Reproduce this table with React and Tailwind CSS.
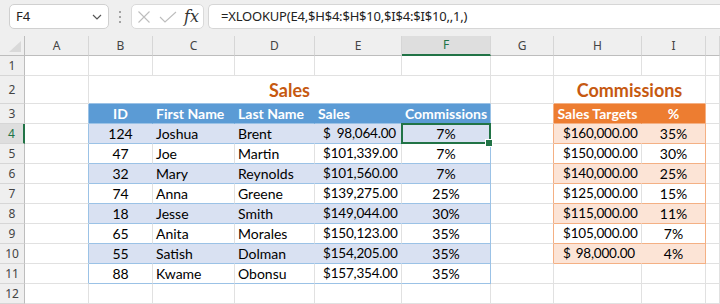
import React from "react";

const GRID = "grid grid-cols-[25px_64px_64px_82px_80px_87px_89px_63px_88px_64px_1fr]";

const sales = [
  [124, "Joshua", "Brent", "98,064.00", "7%"],
  [47, "Joe", "Martin", "101,339.00", "7%"],
  [32, "Mary", "Reynolds", "101,560.00", "7%"],
  [74, "Anna", "Greene", "139,275.00", "25%"],
  [18, "Jesse", "Smith", "149,044.00", "30%"],
  [65, "Anita", "Morales", "150,123.00", "35%"],
  [55, "Satish", "Dolman", "154,205.00", "35%"],
  [88, "Kwame", "Obonsu", "157,354.00", "35%"],
];

const comm = [
  ["160,000.00", "35%"],
  ["150,000.00", "30%"],
  ["140,000.00", "25%"],
  ["125,000.00", "15%"],
  ["115,000.00", "11%"],
  ["105,000.00", "7%"],
  ["98,000.00", "4%"],
];

const GRAY_R = "border-r-[#e1e1e1]";
const GRAY_B = "border-b-[#e1e1e1]";

function C({ r = GRAY_R, b = GRAY_B, bg = "", cls = "", children }) {
  return (
    <div className={`border-r border-b ${r} ${b} ${bg} ${cls} min-w-0 whitespace-nowrap`}>
      {children}
    </div>
  );
}

function RowHead({ n, sel }) {
  return sel ? (
    <div className="border-r-2 border-b border-r-[#217346] border-b-[#d6d6d6] bg-[#dedede] flex items-center justify-center text-[12px] text-[#217346] font-['Noto_Sans',sans-serif]">
      {n}
    </div>
  ) : (
    <div className="border-r border-b border-r-[#bdbdbd] border-b-[#d6d6d6] bg-[#efefef] flex items-center justify-center text-[12px] text-[#444] font-['Noto_Sans',sans-serif]">
      {n}
    </div>
  );
}

function Money({ v, pl = "pl-[8px]", pr = "pr-[5px]" }) {
  return (
    <div className={`flex justify-between ${pl} ${pr} text-[13.5px] tracking-[-0.2px]`}>
      <span>$</span>
      <span>{v}</span>
    </div>
  );
}

function TopBar() {
  return (
    <div className="h-[36px] bg-[#efefef] flex items-start pt-[4px] font-['Noto_Sans',sans-serif]">
      <div className="ml-[9px] w-[100px] h-[25px] bg-white border border-[#d0d0d0] rounded-[5px] flex items-center justify-between pl-[6px] pr-[6px]">
        <span className="text-[13px] text-[#222]">F4</span>
        <svg width="10" height="6" viewBox="0 0 10 6" className="mt-[1px]">
          <polyline points="1,1 5,5 9,1" fill="none" stroke="#555" strokeWidth="1.2" />
        </svg>
      </div>
      <div className="w-[22px] h-[25px] flex flex-col items-center justify-center gap-[3px]">
        <div className="w-[2px] h-[2px] bg-[#8a8a8a] rounded-full"></div>
        <div className="w-[2px] h-[2px] bg-[#8a8a8a] rounded-full"></div>
        <div className="w-[2px] h-[2px] bg-[#8a8a8a] rounded-full"></div>
      </div>
      <div className="w-[73px] h-[25px] bg-white border border-[#dadada] rounded-[5px] flex items-center pl-[5px]">
        <svg width="14" height="14" viewBox="0 0 14 14">
          <path d="M1.5 1.5 L12.5 12.5 M12.5 1.5 L1.5 12.5" stroke="#bdbdbd" strokeWidth="1.1" fill="none" />
        </svg>
        <svg width="18" height="12" viewBox="0 0 18 12" className="ml-[8px]">
          <path d="M1 6 L6 11 L17 1" stroke="#bdbdbd" strokeWidth="1.1" fill="none" />
        </svg>
        <span className="ml-[7px] font-['DejaVu_Serif',serif] italic text-[16px] text-[#333] leading-none">fx</span>
      </div>
      <div className="ml-[4px] flex-1 h-[25px] bg-white border border-[#d6d6d6] rounded-l-[5px] border-r-0 flex items-center pl-[12px]">
        <span className="text-[13px] text-[#222] tracking-[-0.2px]">=XLOOKUP(E4,$H$4:$H$10,$I$4:$I$10,,1,)</span>
      </div>
    </div>
  );
}

function ColHeader() {
  const letters = ["A", "B", "C", "D", "E", "F", "G", "H", "I", ""];
  return (
    <div className={`${GRID} h-[20px] font-['Noto_Sans',sans-serif] text-[12px] text-[#444]`}>
      <div className="border-r border-b border-r-[#bdbdbd] border-b-[#bdbdbd] bg-[#efefef] relative">
        <svg width="14" height="12" viewBox="0 0 14 12" className="absolute right-[2px] bottom-[2px]">
          <polygon points="13,0 13,11 1,11" fill="#d9d9d9" />
        </svg>
      </div>
      {letters.map((l, i) =>
        l === "F" ? (
          <div key={i} className="border-r border-b-2 border-r-[#d6d6d6] border-b-[#217346] bg-[#dedede] flex items-center justify-center text-[#217346]">
            F
          </div>
        ) : (
          <div key={i} className="border-r border-b border-r-[#d6d6d6] border-b-[#bdbdbd] bg-[#efefef] flex items-center justify-center">
            {l}
          </div>
        )
      )}
    </div>
  );
}

const BLUE = "border-r-[#9bc2e6]";
const BLUE_B = "border-b-[#9bc2e6]";
const OR = "border-r-[#f4b084]";
const OR_B = "border-b-[#f4b084]";

function App() {
  const rows = [];
  rows.push(
    <div key="r1" className={`${GRID} h-[20px]`}>
      <RowHead n={1} />
      {Array.from({ length: 10 }).map((_, i) => (
        <C key={i} />
      ))}
    </div>
  );
  rows.push(
    <div key="r2" className={`${GRID} h-[28px]`}>
      <RowHead n={2} />
      <C />
      <C b={BLUE_B} cls="col-span-5 flex items-end justify-center pb-[2px]">
        <span className="font-['Lato',sans-serif] font-bold text-[18px] leading-[22px] text-[#c65911]">Sales</span>
      </C>
      <C />
      <C b={OR_B} cls="col-span-2 flex items-end justify-center pb-[2px]">
        <span className="font-['Lato',sans-serif] font-bold text-[18px] leading-[22px] text-[#c65911]">Commissions</span>
      </C>
      <C />
    </div>
  );
  rows.push(
    <div key="r3" className={`${GRID} h-[20px] font-['Lato',sans-serif] text-[14px] leading-[19px]`}>
      <RowHead n={3} />
      <C r={BLUE} />
      <C r="border-r-[#5b9bd5]" b={BLUE_B} bg="bg-[#5b9bd5]" cls="text-center text-white font-bold">ID</C>
      <C r="border-r-[#5b9bd5]" b={BLUE_B} bg="bg-[#5b9bd5]" cls="pl-[3px] text-white font-bold">First Name</C>
      <C r="border-r-[#5b9bd5]" b={BLUE_B} bg="bg-[#5b9bd5]" cls="pl-[3px] text-white font-bold">Last Name</C>
      <C r="border-r-[#5b9bd5]" b={BLUE_B} bg="bg-[#5b9bd5]" cls="pl-[3px] text-white font-bold">Sales</C>
      <C r={BLUE} b={BLUE_B} bg="bg-[#5b9bd5]" cls="text-center text-white font-bold">Commissions</C>
      <C r={OR} />
      <C r="border-r-[#ed7d31]" b={OR_B} bg="bg-[#ed7d31]" cls="text-center text-white font-bold">Sales Targets</C>
      <C r={OR} b={OR_B} bg="bg-[#ed7d31]" cls="text-center text-white font-bold">%</C>
      <C />
    </div>
  );
  sales.forEach((s, idx) => {
    const rn = idx + 4;
    const filled = idx % 2 === 0;
    const sr = filled ? "border-r-[#d9e1f2]" : GRAY_R;
    const sbg = filled ? "bg-[#d9e1f2]" : "";
    const cm = comm[idx];
    const cr = filled ? "border-r-[#fce4d6]" : GRAY_R;
    const cbg = filled ? "bg-[#fce4d6]" : "";
    rows.push(
      <div key={"r" + rn} className={`${GRID} h-[20px] font-['Lato',sans-serif] text-[14px] leading-[19px] text-black`}>
        <RowHead n={rn} sel={rn === 4} />
        <C r={BLUE} />
        <C r={sr} b={BLUE_B} bg={sbg} cls="text-center">{s[0]}</C>
        <C r={sr} b={BLUE_B} bg={sbg} cls="pl-[3px]">{s[1]}</C>
        <C r={sr} b={BLUE_B} bg={sbg} cls="pl-[3px]">{s[2]}</C>
        <C r={sr} b={BLUE_B} bg={sbg}>
          <Money v={s[3]} />
        </C>
        <C r={BLUE} b={BLUE_B} bg={sbg} cls="text-center relative">
          {s[4]}
          {rn === 4 && (
            <>
              <div className="absolute -left-[1px] -top-[1px] -right-[1px] -bottom-[1px] border-2 border-[#217346] pointer-events-none z-10"></div>
              <div className="absolute -right-[2px] -bottom-[3px] w-[6px] h-[6px] bg-[#217346] outline outline-1 outline-white z-20"></div>
            </>
          )}
        </C>
        {cm ? (
          <>
            <C r={OR} />
            <C r={cr} b={OR_B} bg={cbg}>
              <Money v={cm[0]} pl="pl-[9px]" pr="pr-[6px]" />
            </C>
            <C r={OR} b={OR_B} bg={cbg} cls="text-center">{cm[1]}</C>
          </>
        ) : (
          <>
            <C />
            <C />
            <C />
          </>
        )}
        <C />
      </div>
    );
  });
  rows.push(
    <div key="r12" className={`${GRID} h-[20px]`}>
      <RowHead n={12} />
      {Array.from({ length: 10 }).map((_, i) => (
        <C key={i} />
      ))}
    </div>
  );

  return (
    <div className="w-[720px] h-[304px] overflow-hidden bg-white">
      <TopBar />
      <ColHeader />
      {rows}
    </div>
  );
}

export default App;
